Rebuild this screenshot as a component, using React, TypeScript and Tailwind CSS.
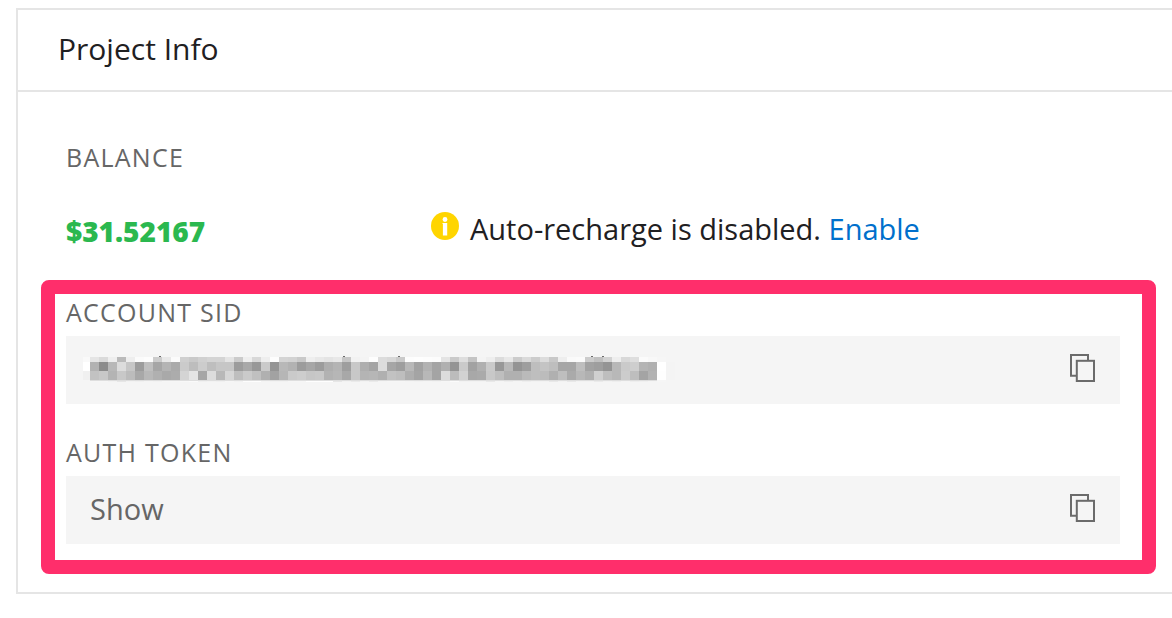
import React from "react";

const TOP =
  "e5 da ee ba ee fb fd cc e8 fb cf c9 d0 d4 d4 e4 cb ee d8 ee fd d4 d2 c9 ee e8 e4 e8 c6 f2 f4 fd dc d8 ca fd fe fd fc e4 ca de c4 f4 ee dc e8 cc da cc dc c8 ee fa fb cc c0 d2 ee d8 de fb f8 f6".split(" ");
const UPPER =
  "b2 8c b8 dc c6 9c bf a6 b4 aa cb bd cc be c6 c6 9c a8 98 ca 94 b8 b2 9c a6 9c ae b4 9e c8 ae a4 dc a6 9e b8 a2 b2 a4 b0 94 ca a2 b0 ca 98 b8 94 9e be c4 be a6 a6 be a2 9e 94 b8 ca ce b4 b0 ff".split(" ");
const LOWER =
  "c2 c8 b4 c8 bc a8 b8 b0 a9 ac d4 e4 a6 dc b8 d6 be ca c0 b0 a2 b6 ca cd c6 c8 b2 b6 a8 c8 b4 b6 b0 c2 be ae a4 b8 a4 dc bc d2 a8 aa c8 be b0 b0 ba be bc b0 be aa b8 b0 d0 be b8 cc be a4 b2 fe".split(" ");
const BOTTOM =
  "f6 f6 f2 e6 f2 f0 f4 f2 f6 f6 f8 fa f0 f2 f0 f6 f2 fd fe f4 f2 f2 f6 f6 fe fe fe e6 f2 ea f2 ea f4 f6 f6 f4 f2 f4 f2 f6 fb f2 f2 f2 e8 f4 ee f4 ee f2 f2 e8 f2 e8 f2 f2 ea f2 ee f4 ee f0 f4 f6".split(" ");

const ROWS = [
  { y: 1, h: 5, cells: TOP },
  { y: 6, h: 9, cells: UPPER },
  { y: 15, h: 9, cells: LOWER },
  { y: 24, h: 2, cells: BOTTOM },
];

const SPECKS = [76, 260, 315, 508, 519];

function RedactedValue() {
  return (
    <svg
      className="block shrink-0"
      width="593"
      height="27"
      viewBox="0 0 593 27"
      shapeRendering="crispEdges"
      role="img"
      aria-label="Redacted"
    >
      <rect x="0" y="1" width="7" height="5" fill="#f9f9f9" />
      <rect x="0" y="6" width="7" height="9" fill="#ffffff" />
      <rect x="0" y="15" width="7" height="9" fill="#f0f0f0" />
      <rect x="583" y="6" width="9" height="18" fill="#f4f4f4" />
      {ROWS.map((row) =>
        row.cells.map((c, i) => (
          <rect key={`${row.y}-${i}`} x={7 + i * 9} y={row.y} width="9" height={row.h} fill={`#${c}${c}${c}`} />
        )),
      )}
      <rect x="7" y="24" width="567" height="1" fill="#dedede" />
      {SPECKS.map((x) => (
        <rect key={x} x={x} y="0" width="2" height="1" fill="#6b6b6b" />
      ))}
    </svg>
  );
}

function CopyButton({ label }: { label: string }) {
  return (
    <button type="button" aria-label={label} className="mb-0.5 shrink-0 cursor-pointer">
      <svg className="block" width="26" height="28" viewBox="0 0 26 28" fill="none">
        <path d="M6 21.7H1V1H18V6" stroke="#6b6b6b" strokeWidth="2" />
        <rect x="6.8" y="6.8" width="17.2" height="20.2" stroke="#6b6b6b" strokeWidth="2" />
      </svg>
    </button>
  );
}

function Field({ id, label, copyLabel, children }: {
  id: string;
  label: string;
  copyLabel: string;
  children: React.ReactNode;
}) {
  return (
    <div>
      <label htmlFor={id} className="block text-[25px] leading-8 tracking-wider text-[#666666] uppercase">
        {label}
      </label>
      <div className="mt-2 flex h-17 items-center justify-between bg-[#f5f5f5] pr-6 pb-0.5">
        {children}
        <CopyButton label={copyLabel} />
      </div>
    </div>
  );
}

export default function App() {
  return (
    <main className="bg-white pt-2 pl-4 font-['Open_Sans','Noto_Sans',sans-serif] text-[#1f2022]">
      <section className="border-2 border-r-0 border-[#e5e5e5]">
        <header className="border-b-2 border-[#e5e5e5] px-10 pt-[19px] pb-[21px]">
          <h1 className="text-[30px] leading-10">Project Info</h1>
        </header>
        <div className="pt-[49px] pb-[18px]">
          <div className="px-12">
            <h2 className="text-[25px] leading-8 tracking-wider text-[#666666] uppercase">Balance</h2>
            <div className="mt-[34px] flex items-center">
              <p className="w-[365px] pt-1 text-[28px] leading-10 font-extrabold text-[#2bb84f]">$31.52167</p>
              <p className="flex items-center gap-[11px] text-[29px] leading-10 whitespace-nowrap">
                <svg className="mb-1.5 shrink-0" width="28" height="28" viewBox="0 0 28 28" aria-hidden="true">
                  <circle cx="14" cy="14" r="14" fill="#ffd500" />
                  <circle cx="14" cy="7.5" r="2.4" fill="#ffffff" />
                  <path d="M11.5 11H16.2V23.5H11.9V12H11.5Z" fill="#ffffff" />
                </svg>
                <span>
                  Auto-recharge is disabled.{" "}
                  <a href="#enable" className="text-[#0070cc]">Enable</a>
                </span>
              </p>
            </div>
          </div>
          <div className="mt-[29px] mr-4 ml-[23px] flex flex-col gap-8 rounded-lg border-14 border-[#ff2e6b] pt-0.5 pr-[22px] pb-4 pl-[11px]">
            <Field id="account-sid" label="Account SID" copyLabel="Copy account SID">
              <output id="account-sid" className="pl-[17px]">
                <RedactedValue />
              </output>
            </Field>
            <Field id="auth-token" label="Auth Token" copyLabel="Copy auth token">
              <button id="auth-token" type="button" className="cursor-pointer pl-6 text-[29px] leading-10 text-[#666666]">
                Show
              </button>
            </Field>
          </div>
        </div>
      </section>
    </main>
  );
}
